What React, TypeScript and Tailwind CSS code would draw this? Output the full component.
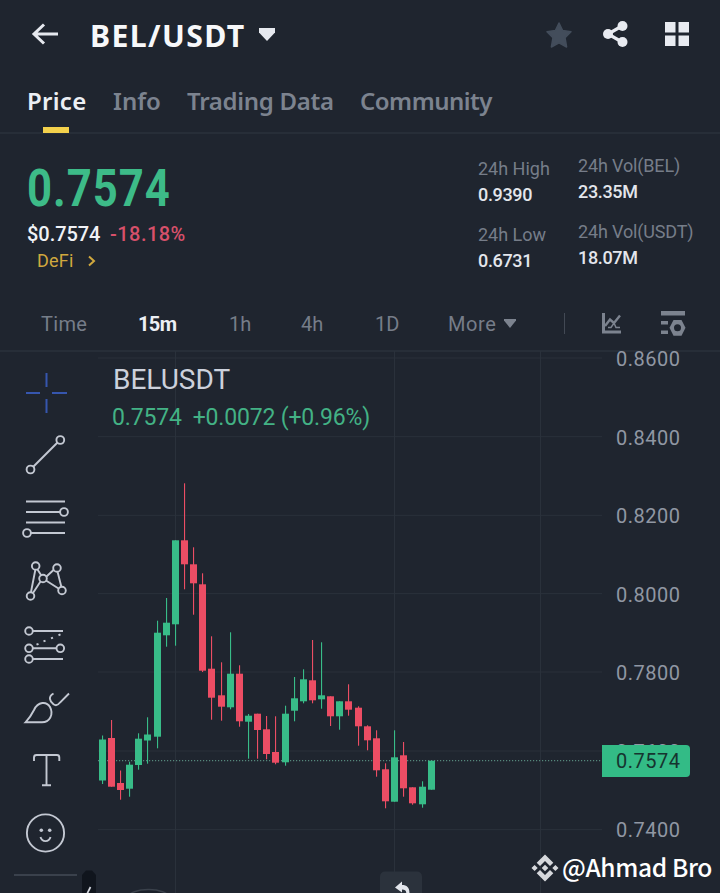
import type { ReactNode } from "react";

type Candle = [x: number, top: number, bottom: number, high: number, low: number, up: 0 | 1];

// x, body top, body bottom, wick top, wick bottom, rising
const candles: Candle[] = [
  [99, 739.5, 780.5, 735.5, 784, 1],
  [108, 738, 786.7, 720, 786.7, 0],
  [117, 783, 790, 770.5, 799.7, 0],
  [126, 764.7, 788.7, 761.7, 796.7, 1],
  [135, 738.7, 765, 733.3, 769.7, 1],
  [144, 734.5, 740.5, 717.3, 763.7, 1],
  [154, 632.7, 736.7, 620.7, 748.3, 1],
  [163, 622.7, 635.3, 598, 646.7, 1],
  [172, 540.3, 624.3, 540.3, 645.7, 1],
  [181, 540.3, 564.3, 483.3, 589.3, 0],
  [190, 564.3, 583.3, 547.3, 614.7, 0],
  [199, 584.3, 670.7, 573.3, 672, 0],
  [208, 668.7, 697.7, 636.3, 719.7, 0],
  [218, 695.3, 706.7, 662.3, 720.7, 0],
  [227, 673.7, 707.3, 632.3, 709.3, 1],
  [236, 673.7, 721.3, 665.3, 726.7, 0],
  [245, 715.7, 721.7, 714, 758.7, 1],
  [254, 713.7, 730, 713.7, 758.7, 0],
  [263, 729.3, 754, 716, 759.3, 0],
  [272, 752, 762.7, 716.3, 764.3, 0],
  [282, 713.7, 762.3, 705.7, 765.7, 1],
  [291, 698.3, 710.7, 677, 721.3, 1],
  [300, 679.3, 701.3, 669.3, 703.3, 1],
  [309, 680.3, 700.3, 640, 703.3, 0],
  [318, 695.3, 699.3, 642.3, 708.7, 1],
  [327, 696.3, 716.3, 696.3, 726, 0],
  [336, 701.3, 716.3, 701.3, 729.7, 1],
  [345, 701.3, 709.7, 684.3, 715.7, 0],
  [355, 707.7, 726.3, 706.3, 745.7, 0],
  [364, 726.3, 740.3, 725.3, 750.3, 0],
  [373, 738.3, 770.3, 730.3, 776.7, 0],
  [382, 769.3, 801.3, 763.3, 808.3, 0],
  [391, 757.3, 801.7, 730.3, 801.7, 1],
  [400, 755.3, 788.3, 742, 796.7, 0],
  [409, 787.3, 803.3, 787.3, 804.7, 0],
  [419, 786.7, 804.3, 781.3, 807.7, 1],
  [428, 760.7, 789.7, 760.7, 789.7, 1],
];

const gridY = [358, 436.7, 515.3, 593.6, 672, 751, 829.6];
const gridX = [175.5, 394.5, 540.5];
const axisLabels = ["0.8600", "0.8400", "0.8200", "0.8000", "0.7800", "0.7600", "0.7400"];

function Tool({ children, color = "#c3c8d2" }: { children: ReactNode; color?: string }) {
  return (
    <svg width="64" height="63" viewBox="0 0 64 63" fill="none" stroke={color} strokeWidth="1.9" className="block shrink-0">
      {children}
    </svg>
  );
}

function Header() {
  return (
    <header className="flex h-[72px] items-center pr-[31px] pl-[31px]">
      <svg width="28" height="22" viewBox="0 0 28 22" fill="none" stroke="#e6e9ef" strokeWidth="3" className="-mt-1">
        <path d="M27 11H3M13 1.5L3 11L13 20.5" />
      </svg>
      <h1 className="-mt-[2px] ml-[31px] w-[156px] whitespace-nowrap font-['Noto_Sans',sans-serif] text-[31px] font-bold leading-none tracking-[1.4px] text-[#f7f8fa]">
        <span className="inline-block origin-left scale-x-[0.975]">BEL/USDT</span>
      </h1>
      <svg width="16" height="13" viewBox="0 0 16 13" className="-mt-1 ml-[13px]">
        <path d="M0 0H16V4.5L8 13L0 4.5Z" fill="#e6e9ef" />
      </svg>
      <div className="-mt-1 ml-auto flex items-center">
        <svg width="28" height="28" viewBox="0 0 28 28" className="mt-[2px] mr-[28px]">
          <path d="M14 2L17.6 9.5L26 10.7L20 16.7L21.6 26L14 21.8L6.4 26L8 16.7L2 10.7L10.4 9.5Z" fill="#434d5b" stroke="#434d5b" strokeWidth="1.5" strokeLinejoin="round" />
        </svg>
        <svg width="28" height="28" viewBox="0 0 28 28" className="mr-[36px]" fill="#e8ebf1">
          <path d="M21 6L7 14L21 22" fill="none" stroke="#e8ebf1" strokeWidth="3.2" />
          <circle cx="21.5" cy="6" r="5" />
          <circle cx="7" cy="14" r="5" />
          <circle cx="21.5" cy="22" r="5" />
        </svg>
        <svg width="24" height="24" viewBox="0 0 24 24" fill="#e8ebf1">
          <path d="M0 0H10.5V10.5H0ZM13.5 0H24V10.5H13.5ZM0 13.5H10.5V24H0ZM13.5 13.5H24V24H13.5Z" />
        </svg>
      </div>
    </header>
  );
}

function Tabs() {
  return (
    <nav className="flex h-[62px] border-b-2 border-[#272e38] pl-[27px] font-['Noto_Sans',sans-serif] text-[24px] font-semibold leading-[57px] whitespace-nowrap text-[#7c838f]">
      <div className="flex w-[86px] flex-col">
        <span className="h-[55px] tracking-[0.3px] text-[#eceff4]">Price</span>
        <span className="ml-4 h-[6px] w-[26px] shrink-0 bg-[#f3d14c]" />
      </div>
      <span className="w-[74px]">Info</span>
      <span className="w-[173px] tracking-[-0.3px]">Trading Data</span>
      <span className="tracking-[-0.5px]">Community</span>
    </nav>
  );
}

function Stat({ label, value, tight = false }: { label: string; value: string; tight?: boolean }) {
  return (
    <div className="h-[66px] whitespace-nowrap">
      <div className={`text-[18px] leading-[26px] text-[#767d89] ${tight ? "tracking-[-0.15px]" : ""}`}>{label}</div>
      <div className="text-[18px] font-medium leading-[26px] tracking-[-0.35px] text-[#e3e6ec]">{value}</div>
    </div>
  );
}

function Summary() {
  return (
    <section className="flex h-[163px]">
      <div className="w-[478px] pt-[27px] pl-[27px]">
        <div className="h-[60px] w-[170px] origin-left scale-x-[0.855] text-[51px] font-bold leading-[55px] tracking-[1.2px] text-[#3dbb88]">0.7574</div>
        <div className="flex h-[27px] gap-[9px] text-[20px] font-medium leading-[26px]">
          <span className="w-[74px] tracking-[-0.05px] text-[#f0f2f6]">$0.7574</span>
          <span className="tracking-[0.45px] text-[#d7506a]">-18.18%</span>
        </div>
        <div className="flex items-center pl-[10px] text-[18px] leading-[26px] text-[#d0a83e]">
          <span className="w-[51px] tracking-[0.2px]">DeFi</span>
          <svg width="8" height="12" viewBox="0 0 8 12" fill="none" stroke="#d0a83e" strokeWidth="2">
            <path d="M1 1.5L6 6L1 10.5" />
          </svg>
        </div>
      </div>
      <div className="w-[100px] pt-[22px]">
        <Stat label="24h High" value="0.9390" />
        <Stat label="24h Low" value="0.6731" />
      </div>
      <div className="pt-[19px]">
        <Stat label="24h Vol(BEL)" value="23.35M" tight />
        <Stat label="24h Vol(USDT)" value="18.07M" tight />
      </div>
    </section>
  );
}

function Intervals() {
  return (
    <div className="flex h-[55px] items-center border-b-2 border-[#272e38] pl-[41px] text-[20px] whitespace-nowrap text-[#767d89]">
      <span className="w-[97px] tracking-[0.3px]">Time</span>
      <span className="w-[91px] font-bold tracking-[-0.6px] text-[#eceff4]">15m</span>
      <span className="w-[72px]">1h</span>
      <span className="w-[74px]">4h</span>
      <span className="w-[73px]">1D</span>
      <span className="w-[56px] tracking-[0.6px]">More</span>
      <svg width="12" height="9" viewBox="0 0 12 9">
        <path d="M0 0H12V1.5L6 9L0 1.5Z" fill="#7c838f" />
      </svg>
      <span className="ml-[48px] h-[21px] w-px bg-[#424954]" />
      <svg width="20" height="21" viewBox="0 0 20 21" fill="none" stroke="#7c838f" className="ml-[37px]">
        <path d="M1.5 0V19H19" strokeWidth="3" />
        <path d="M3 13L8 6.5L12 10L18 2.5" strokeWidth="2.4" />
        <path d="M6 14.5H9L12 10L14 14.5H18" strokeWidth="1.5" />
      </svg>
      <svg width="25" height="25" viewBox="0 0 25 25" className="ml-[39px]" fill="#7c838f">
        <path d="M0 0H24V4.4H0ZM0 10H7V13.5H0ZM0 19.5H7V23H0Z" />
        <path fillRule="evenodd" d="M12.5 9H20.5L24.5 16.8L20.5 24.7H12.5L8.5 16.8ZM16.5 13.3A3.5 3.5 0 1 0 16.5 20.3A3.5 3.5 0 1 0 16.5 13.3Z" />
      </svg>
    </div>
  );
}

function Toolbar() {
  return (
    <aside className="flex w-[98px] shrink-0 flex-col pt-[10px] pl-[14px]">
      <Tool color="#3656ae">
        <path d="M32.5 12V26M32.5 38V52M12 32H26M38 32H53" strokeWidth="2" />
      </Tool>
      <Tool>
        <path d="M19 43L43.5 18.5" />
        <circle cx="46.3" cy="16" r="3.9" />
        <circle cx="16.5" cy="45.5" r="3.9" />
      </Tool>
      <Tool>
        <path d="M12 14.5H51M12 25H46M12 35.5H51M17 46H51" />
        <circle cx="50" cy="25" r="3.9" />
        <circle cx="13" cy="46" r="3.9" />
      </Tool>
      <Tool>
        <path d="M21.3 20L17 42M23.5 19.5L27 25M26.5 31.5L19 43M32.5 26.5L39.5 20M43.6 22L47.3 36.5M32 30.5L44.5 38.5" />
        <circle cx="21.7" cy="16" r="3.8" />
        <circle cx="29" cy="28.5" r="3.8" />
        <circle cx="43" cy="18" r="3.8" />
        <circle cx="48" cy="40.5" r="3.8" />
        <circle cx="16.5" cy="46" r="3.8" />
      </Tool>
      <Tool>
        <path d="M19 18H49M19 35.3H42M19 46H49" />
        <path d="M22.5 31.7L24.5 30.8M29.5 28.4L31.5 27.6M37 25.4L39 24.6M44.5 22.2L46.5 21.4" strokeWidth="2" />
        <circle cx="15" cy="18" r="3.8" />
        <circle cx="15" cy="35.3" r="3.8" />
        <circle cx="46.3" cy="35.3" r="3.8" />
        <circle cx="15" cy="46" r="3.8" />
      </Tool>
      <Tool>
        <path d="M11.5 46.3C16 41.5 18 38 20 34C24 25.500 32.500 25 36 31C40 38.500 35.500 46.3 28 46.3Z" />
        <path d="M39.5 17.5C34 20.5 35.5 25 39.5 28.3C42 30 44.5 28.5 46 26.5L55 17.5" />
      </Tool>
      <Tool>
        <path d="M20 22V18.5Q20 16 22.5 16H43Q45.3 16 45.3 18.5V22M32.5 16V46.3M28 46.3H37" />
      </Tool>
      <Tool>
        <circle cx="31.5" cy="31" r="18.6" />
        <path d="M26.5 35C28 40.5 35 40.5 36.5 35" />
        <circle cx="27.3" cy="28.3" r="1.8" fill="#c3c8d2" stroke="none" />
        <circle cx="35.7" cy="28.3" r="1.8" fill="#c3c8d2" stroke="none" />
      </Tool>
      <div className="flex">
        <span className="mt-[9px] h-[2px] w-[63px] bg-[#3a414c]" />
        <svg width="14" height="28" viewBox="0 0 14 28" className="mt-[5px] -mb-5 ml-[5px] block">
          <path d="M0 28V5L4 0.5H10L14 5V28Z" fill="#10151d" />
          <path d="M8.5 17L4.5 25" stroke="#d3d7df" strokeWidth="1.7" />
        </svg>
      </div>
    </aside>
  );
}

function Chart() {
  return (
    <div className="relative flex h-[542px] min-w-0 flex-1">
      <svg width="504" height="542" viewBox="98 351 504 542" className="block shrink-0">
        <g fill="#2a313b">
          {gridY.map((y) => (
            <rect key={y} x="98" y={y - 0.5} width="504" height="1" />
          ))}
          {gridX.map((x) => (
            <rect key={x} x={x - 0.5} y="351" width="1" height="542" />
          ))}
        </g>
        <path d="M98 760.7H602" stroke="#55877b" strokeWidth="1.2" strokeDasharray="1.2 1.8" />
        {candles.map(([x, top, bottom, high, low, up]) => (
          <g key={x} fill={up ? "#38bc88" : "#ec4d64"}>
            <rect x={x + 3} y={high} width="1.1" height={low - high} />
            <rect x={x} y={top} width="7" height={bottom - top} />
          </g>
        ))}
        <ellipse cx="148.5" cy="897" rx="20" ry="7.5" fill="#1a2029" stroke="#3a414b" strokeWidth="1.5" />
        <rect x="380" y="871.5" width="42" height="30" rx="5" fill="#2b323c" />
        <path d="M395 887.5L402 881.5V885C408 885 410.5 889 409 896H406C407 891 405.5 889.5 402 889.5V892.5Z" fill="#e3e6ec" />
      </svg>
      <div className="-mt-[2px] ml-[14px] flex flex-col gap-[58.5px] font-[Roboto,sans-serif] text-[20px] leading-[20px] tracking-[0.5px] text-[#9097a3]">
        {axisLabels.map((label) => (
          <span key={label}>{label}</span>
        ))}
      </div>
      <div className="absolute top-[13px] left-[15px] whitespace-nowrap font-[Roboto,sans-serif]">
        <div className="text-[28px] leading-[32px] text-[#ccd1dc]">BELUSDT</div>
        <div className="mt-[8px] -ml-px flex gap-[11px] text-[23px] leading-[28px] tracking-[-0.17px] text-[#43b285]">
          <span>0.7574</span>
          <span>+0.0072 (+0.96%)</span>
        </div>
      </div>
      <div className="absolute top-[394px] left-[504px] h-[32px] w-[88px] rounded-r-[4px] bg-[#33bb86] pl-[14px] font-[Roboto,sans-serif] text-[20px] leading-[32px] tracking-[0.5px] text-[#16342f]">
        0.7574
      </div>
      <div className="absolute top-[503px] left-[433px] flex items-center whitespace-nowrap">
        <svg width="28" height="28" viewBox="0 0 28 28" fill="#d6d8dc">
          <path d="M14 0.5L22.3 8.8L19 12L14 7L9 12L5.7 8.8ZM14 27.5L5.7 19.2L9 16L14 21L19 16L22.3 19.2ZM0.5 14L3.6 10.9L6.7 14L3.6 17.1ZM21.3 14L24.4 10.9L27.5 14L24.4 17.1ZM14 10.7L17.3 14L14 17.3L10.7 14Z" />
        </svg>
        <span className="-mt-[2px] ml-[3px] font-['Noto_Sans_CJK_SC','Noto_Sans',sans-serif] text-[24.5px] font-medium leading-[30px] tracking-[-0.35px] text-white">@Ahmad Bro</span>
      </div>
    </div>
  );
}

export default function App() {
  return (
    <main className="h-[893px] w-[720px] overflow-hidden bg-[#1f252f] font-[Roboto,sans-serif]">
      <Header />
      <Tabs />
      <Summary />
      <Intervals />
      <div className="-mt-px flex h-[542px]">
        <Toolbar />
        <Chart />
      </div>
    </main>
  );
}
